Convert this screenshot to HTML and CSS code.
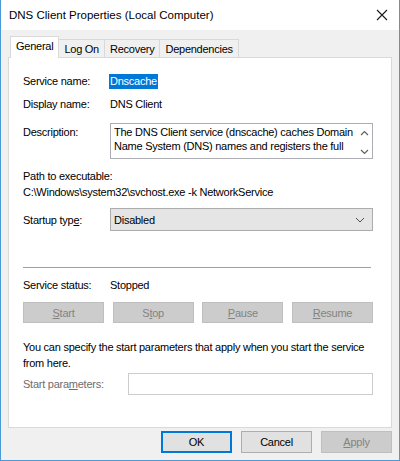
FILE: index.html
```html
<!DOCTYPE html>
<html>
<head>
  <link rel="stylesheet" href="styles.css">
</head>
<body>
  <div class="window">
    <div class="titlebar">
      <span class="title">DNS Client Properties (Local Computer)</span>
      <svg class="close" width="12" height="12" viewBox="0 0 12 12">
        <path d="M1 1 L11 11 M11 1 L1 11" stroke="#1a1a1a" stroke-width="1.1" fill="none"/>
      </svg>
    </div>
    <div class="client">
      <div class="tabs">
        <div class="tab active">General</div>
        <div class="tab">Log On</div>
        <div class="tab">Recovery</div>
        <div class="tab">Dependencies</div>
      </div>
      <div class="panel">
        <div class="row r-name">
          <span class="label">Service name:</span>
          <span class="selected">Dnscache</span>
        </div>
        <div class="row r-display">
          <span class="label">Display name:</span>
          <span>DNS Client</span>
        </div>
        <div class="row r-desc">
          <span class="label">Description:</span>
          <div class="textbox">
            <div class="desc-text">The DNS Client service (dnscache) caches Domain Name System (DNS) names and registers the full</div>
            <div class="scroll">
              <svg width="9" height="6" viewBox="0 0 9 6"><path d="M1 5 L4.5 1.5 L8 5" stroke="#606060" stroke-width="1.2" fill="none"/></svg>
              <svg width="9" height="6" viewBox="0 0 9 6"><path d="M1 1 L4.5 4.5 L8 1" stroke="#606060" stroke-width="1.2" fill="none"/></svg>
            </div>
          </div>
        </div>
        <div class="path-label">Path to executable:</div>
        <div class="path">C:\Windows\system32\svchost.exe -k NetworkService</div>
        <div class="row r-startup">
          <span class="label">Startup typ<u>e</u>:</span>
          <div class="combo">
            <span>Disabled</span>
            <svg width="10" height="6" viewBox="0 0 10 6"><path d="M1 1 L5 5 L9 1" stroke="#505050" stroke-width="1" fill="none"/></svg>
          </div>
        </div>
        <div class="separator"></div>
        <div class="row r-status">
          <span class="label">Service status:</span>
          <span>Stopped</span>
        </div>
        <div class="buttons">
          <button class="btn" disabled><u>S</u>tart</button>
          <button class="btn" disabled>S<u>t</u>op</button>
          <button class="btn" disabled><u>P</u>ause</button>
          <button class="btn" disabled><u>R</u>esume</button>
        </div>
        <p class="note">You can specify the start parameters that apply when you start the service from here.</p>
        <div class="row r-params">
          <span class="label muted">Start para<u>m</u>eters:</span>
          <div class="input"></div>
        </div>
      </div>
      <div class="footer">
        <button class="btn dlg default">OK</button>
        <button class="btn dlg">Cancel</button>
        <button class="btn dlg" disabled><u>A</u>pply</button>
      </div>
    </div>
  </div>
</body>
</html>
```

FILE: styles.css
```css
* {
  box-sizing: border-box;
}
body {
  margin: 0;
  font-family: "Liberation Sans", Arial, sans-serif;
  font-size: 11px;
  letter-spacing: -0.25px;
  color: #000;
  background: #fff;
}
.window {
  width: 400px;
  height: 461px;
  border: 1px solid #4a9ad8;
  border-top: none;
  background: #f0f0f0;
  display: flex;
  flex-direction: column;
}
.titlebar {
  height: 30px;
  background: #fff;
  display: flex;
  align-items: center;
  justify-content: space-between;
  padding: 0 10px 0 8px;
}
.title {
  font-size: 11.5px;
  letter-spacing: 0;
  color: #000;
}
.close {
  margin-right: 1px;
}
.client {
  flex: 1;
  padding: 6px 7px 0 7px;
  display: flex;
  flex-direction: column;
}
.tabs {
  display: flex;
  align-items: flex-end;
  height: 21px;
  padding-left: 2px;
  position: relative;
  z-index: 1;
}
.tab {
  height: 18px;
  padding: 0 5px;
  border: 1px solid #d9d9d9;
  border-bottom: none;
  border-left: none;
  background: #f0f0f0;
  display: flex;
  align-items: center;
}
.tab.active {
  height: 22px;
  margin-bottom: -1px;
  background: #fff;
  border-left: 1px solid #d9d9d9;
  padding: 3px 5px 0;
  align-items: flex-start;
}
.panel {
  height: 371px;
  background: #fff;
  border: 1px solid #d9d9d9;
  padding: 15px 18px 0 14px;
  display: flex;
  flex-direction: column;
}
.row {
  display: flex;
  align-items: center;
}
.label {
  width: 87px;
  flex: none;
}
.muted {
  color: #6d6d6d;
  width: 105px;
}
.selected {
  background: #0078d7;
  color: #fff;
  padding: 0 1px;
  margin-left: -1px;
  line-height: 15px;
}
.r-name {
  height: 16px;
}
.r-display {
  height: 16px;
  margin-top: 7px;
}
.r-desc {
  align-items: flex-start;
  margin-top: 11px;
}
.r-desc .label {
  padding-top: 3px;
}
.textbox {
  flex: 1;
  height: 36px;
  border: 1px solid #abadb3;
  display: flex;
  padding: 1px 0 0 3px;
}
.desc-text {
  flex: 1;
  line-height: 14px;
  overflow: hidden;
  height: 30px;
}
.scroll {
  width: 16px;
  display: flex;
  flex-direction: column;
  justify-content: space-between;
  align-items: center;
  padding: 5px 0 3px;
}
.path-label {
  margin-top: 9px;
  line-height: 16px;
}
.path {
  line-height: 16px;
}
.r-startup {
  margin-top: 8px;
}
.combo {
  flex: 1;
  height: 23px;
  background: #e5e5e5;
  border: 1px solid #acacac;
  display: flex;
  align-items: center;
  justify-content: space-between;
  padding: 0 7px 0 3px;
}
.separator {
  height: 1px;
  background: #a0a0a0;
  margin: 36px 2px 0 0;
}
.r-status {
  height: 16px;
  margin-top: 9px;
}
.buttons {
  display: flex;
  justify-content: space-between;
  margin-top: 9px;
}
.btn {
  font-family: inherit;
  font-size: 11px;
  letter-spacing: -0.25px;
  height: 21px;
  border: 1px solid #adadad;
  background: #e1e1e1;
  color: #000;
  padding: 0;
}
.btn:disabled {
  background: #cccccc;
  border-color: #bfbfbf;
  color: #838383;
}
.buttons .btn {
  width: 81px;
}
.note {
  margin: 16px 0 0;
  line-height: 16px;
}
.r-params {
  margin-top: 2px;
}
.input {
  flex: 1;
  height: 22px;
  border: 1px solid #cccccc;
}
.footer {
  display: flex;
  justify-content: flex-end;
  gap: 9px;
  padding-top: 3px;
}
.btn.dlg {
  width: 71px;
  height: 22px;
}
.btn.default {
  border: 2px solid #0078d7;
  background: #e1e1e1;
}
```
